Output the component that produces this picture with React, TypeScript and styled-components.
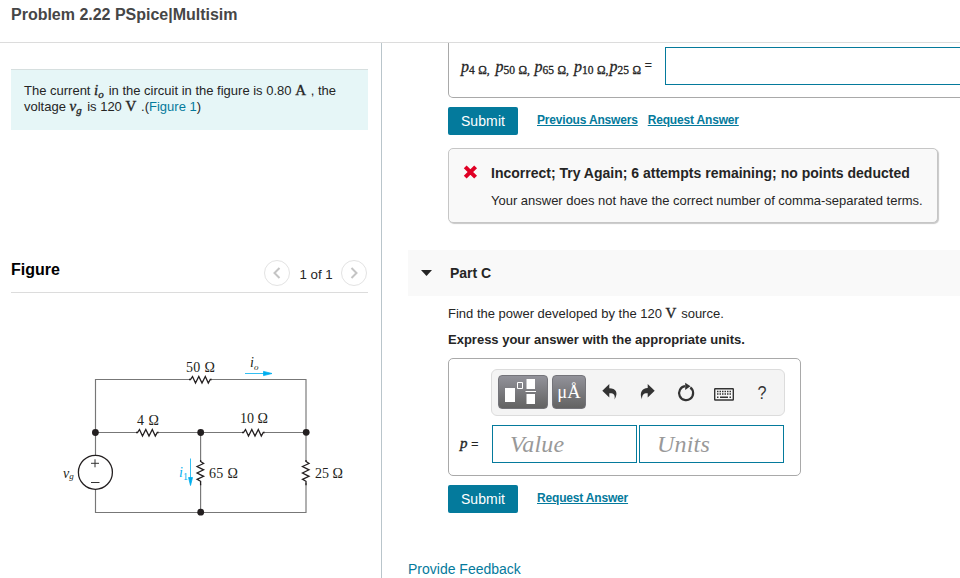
import React from "react";
import styled, { createGlobalStyle } from "styled-components";

const GlobalStyle = createGlobalStyle`
  * { box-sizing: border-box; }
  body { margin: 0; background: #fff; overflow: hidden; color: #252525; font-family: "Liberation Sans", Arial, sans-serif; font-size: 13px; }
`;

const Page = styled.div`width: 960px; height: 578px; overflow: hidden; display: flex; flex-direction: column;`;
const Header = styled.header`height: 43px; flex: none; border-bottom: 1px solid #dcdcdc; padding: 5px 11px 0;`;
const Title = styled.h1`margin: 0; font-size: 16px; line-height: 19px; color: #464646; white-space: pre; letter-spacing: -0.01px;`;
const Body = styled.div`display: grid; grid-template-columns: 382px 578px; flex: 1; min-height: 0;`;
const Left = styled.section`border-right: 1px solid #b9c5cb; padding: 26px 13px 0 11px; display: flex; flex-direction: column;`;
const Right = styled.section`padding-left: 66px; display: flex; flex-direction: column; overflow: hidden;`;

const Line = styled.div<{ $bold?: boolean; $ls?: number; $size?: number }>`
  white-space: pre;
  height: 16px;
  line-height: 16px;
  font-size: ${(p) => p.$size ?? 13}px;
  font-weight: ${(p) => (p.$bold ? 700 : 400)};
  letter-spacing: ${(p) => p.$ls ?? 0}px;
`;
const Intro = styled.div`height: 61px; flex: none; border-top: 1px solid #d6dfdf; background: #e6f6f7; padding: 12px 13px;`;
const Link = styled.span`color: #047a9c;`;
const Math = styled.span<{ $w?: number; $size?: number; $italic?: boolean }>`
  display: inline-block;
  width: ${(p) => (p.$w ? p.$w + "px" : "auto")};
  font-family: "Liberation Serif", serif;
  font-size: ${(p) => p.$size ?? 15}px;
  font-style: ${(p) => (p.$italic ? "italic" : "normal")};
  line-height: 16px;
  letter-spacing: 0;
  -webkit-text-stroke: 0.35px currentColor;
`;
const Sub = styled.span<{ $size?: number }>`
  font-size: ${(p) => p.$size ?? 11}px;
  position: relative;
  top: 3px;
`;

const FigureBar = styled.div`height: 53px; flex: none; margin-top: 110px; border-bottom: 1px solid #dcdcdc; display: flex; justify-content: space-between; padding: 20px 1px 0 0;`;
const FigureTitle = styled.h2`margin: 1px 0 0; font-size: 16px; line-height: 18px; color: #000;`;
const Pager = styled.div`display: flex; align-items: center; gap: 9.5px; height: 26px;`;
const PageText = styled.span`font-size: 13.300px; line-height: 16px; padding-top: 3px; width: 32px; white-space: nowrap; text-align: center;`;
const Round = styled.button`width: 26px; height: 26px; border: 1px solid #e3e3e3; border-radius: 50%; background: #fff; padding: 0; display: flex; align-items: center; justify-content: center;`;
const Drawing = styled.svg`display: block; flex: none; margin: 47px 0 0 39px;`;

const TermsBox = styled.div`height: 55px; width: 520px; flex: none; border: 1px solid #a9a9a9; border-top: 0; border-radius: 0 0 0 5px; display: flex;`;
const TermsLabel = styled.div`width: 216px; flex: none; padding: 16px 0 0 12px; white-space: pre; display: flex; color: #252525;`;
const TermsInput = styled.div`margin-top: 4px; height: 38px; flex: 1; border: 1px solid #047a9c; background: #fff;`;
const Power = styled.span<{ $w: number }>`width: ${(p) => p.$w}px; flex: none; font: italic 16px/16px "Liberation Serif", serif; -webkit-text-stroke: 0.3px currentColor;`;
const PowerSub = styled.span`font-size: 11.500px; font-style: normal; position: relative; top: 2px; word-spacing: 0.500px;`;
const Equals = styled.span`font: 13px/12px "Liberation Sans", sans-serif;`;

const Actions = styled.div<{ $mt: number }>`margin-top: ${(p) => p.$mt}px; height: 28px; flex: none; display: flex;`;
const Submit = styled.button`width: 70px; height: 28px; border: 0; border-radius: 2px; padding: 0; background: #047a9c; color: #fff; font: 14px/28px "Liberation Sans", sans-serif; letter-spacing: 0.1px; margin-right: 19px;`;
const ActionLink = styled.a`color: #047a9c; font-size: 12px; font-weight: 700; text-decoration: underline; line-height: 14px; margin: 6px 10px 0 0; white-space: nowrap; letter-spacing: -0.180px;`;

const Notice = styled.div`margin-top: 13px; width: 490px; height: 75px; flex: none; background: #f9f9f9; border: 1px solid #c6c6c6; border-radius: 5px; box-shadow: 1px 1px 1px #c8c8c8; display: flex; padding: 16px 0 0 14px;`;
const NoticeIcon = styled.svg`display: block; flex: none; margin: 0 13px 0 0;`;
const NoticeText = styled.div`display: flex; flex-direction: column; gap: 12px;`;
const PartBar = styled.div`margin: 27px 0 0 -40px; height: 46px; flex: none; background: #f9f9f9; padding: 0 0 0 13px; display: flex; align-items: center; gap: 18px;`;
const Prompt = styled.div`margin-top: 9px; display: flex; flex: none; flex-direction: column; gap: 11px;`;

const AnswerBox = styled.div`margin-top: 10px; width: 353px; height: 118px; flex: none; border: 1px solid #a9a9a9; border-radius: 5px; padding: 10px 15px 0 11px; display: flex; flex-direction: column;`;
const Toolbar = styled.div`margin-left: 31px; width: 294px; height: 47px; flex: none; border: 1px solid #dcdcdc; border-radius: 6px; background: #f4f4f4; display: flex; padding: 5px 0 0 6px;`;
const DarkButton = styled.button<{ $w: number }>`width: ${(p) => p.$w}px; height: 34px; flex: none; margin-right: 4px; padding: 0; border: 1px solid #74747a; border-radius: 4px; background: linear-gradient(#92929a, #626262); color: #fff; font: 18.500px/34px "Liberation Serif", serif; display: flex; align-items: center; justify-content: center;`;
const ToolIcons = styled.svg`display: block; flex: none;`;
const Fields = styled.div`margin-top: 9px; display: flex; height: 38px;`;
const FieldLabel = styled.div`width: 32px; flex: none; padding-top: 10px; white-space: pre; font: 13px/16px "Liberation Sans", sans-serif;`;
const Field = styled.div`width: 145px; flex: none; height: 38px; margin-right: 2px; border: 1px solid #047a9c; padding-left: 17px; font: italic 24px/36px "Liberation Serif", serif; letter-spacing: 0.200px; color: #999;`;
const Feedback = styled.a`margin: 47px 0 0 -40px; color: #047a9c; font-size: 14px; line-height: 18px;`;

const Wire = styled.path`fill: none; stroke: #777; stroke-width: 1.15;`;
const Resistor = styled.path`fill: none; stroke: #231f20; stroke-width: 1.3; stroke-linejoin: miter;`;
const Label = styled.text<{ $blue?: boolean; $italic?: boolean }>`font: ${(p) => (p.$italic ? "italic" : "normal")} 14px "Liberation Serif", serif; fill: ${(p) => (p.$blue ? "#00aeef" : "#231f20")};`;
const Arrow = styled.path`stroke: #00aeef; fill: #00aeef;`;

const terms = [
  { value: "4", comma: ",", width: 34.5 },
  { value: "50", comma: ",", width: 39 },
  { value: "65", comma: ",", width: 39.5 },
  { value: "10", comma: ",", width: 35.5 },
  { value: "25", comma: "", width: 35 },
];

const Circuit = () => (
  <Drawing width="320" height="190" viewBox="50 340 320 190">
    <Wire d="M190 379.5H95.5V455M95.5 489.500V512.500H306V483M306 462V379.500H212M95.500 432.500H137M159 432.500H243M265 432.500H306M200.600 432.500V461M200.600 484V512.500" />
    <Resistor d="M189 379.500h1.500l2-3 3 6.500 3.300-6.500 3.200 6.500 3.300-6.500 3 6.500 2-3.500h1.500" />
    <Resistor d="M136 432.500h1.500l2-3 3 6.500 3.300-6.500 3.200 6.500 3.300-6.500 3 6.500 2-3.500h1.500" />
    <Resistor d="M242 432.500h1.500l2-3 3 6.500 3.300-6.500 3.200 6.500 3.300-6.500 3 6.500 2-3.500h1.500" />
    <Resistor d="M200.600 460v1.500l3 2-6.500 3 6.500 3.300-6.500 3.200 6.500 3.300-6.500 3 3.500 2v4" />
    <Resistor d="M306 460v1.500l3 2-6.500 3 6.500 3.300-6.500 3.200 6.500 3.300-6.500 3 3.500 2v4" />
    <circle cx="95.400" cy="472.300" r="17" fill="#fff" stroke="#231f20" strokeWidth="1.300" />
    <path d="M91 463.300h8M95 459.300v8M91 482.500h8.500" stroke="#333" strokeWidth="1" />
    <circle cx="95.400" cy="432.500" r="3.400" fill="#231f20" />
    <circle cx="200.700" cy="432.500" r="3.400" fill="#231f20" />
    <circle cx="306.200" cy="432.300" r="3.400" fill="#231f20" />
    <circle cx="200.700" cy="512.200" r="3.400" fill="#231f20" />
    <Label x="186" y="372" textLength="29">50 Ω</Label>
    <Label x="137" y="424.500" textLength="22">4 Ω</Label>
    <Label x="240" y="423" textLength="28">10 Ω</Label>
    <Label x="209" y="477.500" textLength="29">65 Ω</Label>
    <Label x="315" y="477.500" textLength="28">25 Ω</Label>
    <Label $italic x="250" y="367">i<tspan fontSize="9" dy="3">o</tspan></Label>
    <Label $italic x="63" y="477.500">v<tspan fontSize="9" dy="1">g</tspan></Label>
    <Label $blue $italic x="179" y="477">i<tspan fontSize="10" fontStyle="normal" dy="2.500">1</tspan></Label>
    <Arrow d="M245 373.500h20M263.500 371.400l8.500 2.100-8.500 2.100z" strokeWidth=".8" />
    <Arrow d="M190.500 458.500v21M188.600 477.500h3.900l-2 8z" strokeWidth=".8" />
  </Drawing>
);

const EditorIcons = () => (
  <ToolIcons width="190" height="34" viewBox="590 375 190 34" fill="#333">
    <path d="M602.300 390.800l7-6.800v4.300c6.500 0 9.500 4.500 5.200 11.200 .9-4.800-.7-6.500-5.200-6.300v4.300z" />
    <path d="M654.700 390.800l-7-6.800v4c-6 .3-8.500 5-5.700 11.200 0-4.600 1.500-6.200 5.700-6v4.300z" />
    <path d="M690.300 387.500A7 7 0 1 1 685 386.200" fill="none" stroke="#333" strokeWidth="2.200" />
    <path d="M685.200 382.800l5.300 3.500-5.300 3.700z" />
    <rect x="714.700" y="388.700" width="18.600" height="11.300" rx=".5" fill="#f8f8f8" stroke="#333" strokeWidth="1.400" />
    <path d="M717 391.500h14M717 394h14" stroke="#333" strokeWidth="1.300" strokeDasharray="1.500 1" />
    <path d="M717 397.200h1.500M720 397.200h8M729.500 397.200h1.500" stroke="#333" strokeWidth="1.400" />
    <text x="757.500" y="398.500" fontFamily="Liberation Sans, sans-serif" fontSize="18" textLength="9" lengthAdjust="spacingAndGlyphs">?</text>
  </ToolIcons>
);

export default function App() {
  return (
    <Page>
      <GlobalStyle />
      <Header><Title>Problem 2.22 PSpice|Multisim</Title></Header>
      <Body>
        <Left>
          <Intro>
            <Line>The current <Math $italic $w={11}>i<Sub>o</Sub></Math> in the circuit in the figure is 0.80 <Math $w={12}>A</Math> , the</Line>
            <Line>voltage <Math $italic $w={14}>v<Sub>g</Sub></Math> is 120 <Math $w={12}>V</Math> .(<Link>Figure 1</Link>)</Line>
          </Intro>
          <FigureBar>
            <FigureTitle>Figure</FigureTitle>
            <Pager>
              <Round aria-label="Previous"><svg width="12" height="14" viewBox="0 0 12 14"><path d="M8.500 2L3.500 7l5 5" fill="none" stroke="#c4c4c4" strokeWidth="2" /></svg></Round>
              <PageText>1 of 1</PageText>
              <Round aria-label="Next"><svg width="12" height="14" viewBox="0 0 12 14"><path d="M3.500 2l5 5-5 5" fill="none" stroke="#c4c4c4" strokeWidth="2" /></svg></Round>
            </Pager>
          </FigureBar>
          <Circuit />
        </Left>
        <Right>
          <TermsBox>
            <TermsLabel>
              {terms.map((t) => (
                <Power key={t.value} $w={t.width}>p<PowerSub>{t.value} Ω{t.comma}</PowerSub></Power>
              ))}
              <Equals>=</Equals>
            </TermsLabel>
            <TermsInput />
          </TermsBox>
          <Actions $mt={9}>
            <Submit>Submit</Submit>
            <ActionLink>Previous Answers</ActionLink>
            <ActionLink>Request Answer</ActionLink>
          </Actions>
          <Notice>
            <NoticeIcon width="15" height="14" viewBox="0 0 15 14"><path d="M2.200 1.800l10.400 10.400M12.600 1.800L2.200 12.200" stroke="#e00025" strokeWidth="4" /></NoticeIcon>
            <NoticeText>
              <Line $bold $size={14}>Incorrect; Try Again; 6 attempts remaining; no points deducted</Line>
              <Line $ls={-0.01}>Your answer does not have the correct number of comma-separated terms.</Line>
            </NoticeText>
          </Notice>
          <PartBar>
            <svg width="11" height="6" viewBox="0 0 11 6"><path d="M0 0h11L5.500 6z" fill="#252525" /></svg>
            <Line $bold $size={14}>Part C</Line>
          </PartBar>
          <Prompt>
            <Line>Find the power developed by the 120 <Math $w={12}>V</Math> source.</Line>
            <Line $bold>Express your answer with the appropriate units.</Line>
          </Prompt>
          <AnswerBox>
            <Toolbar>
              <DarkButton $w={50} aria-label="Templates">
                <svg width="48" height="32" viewBox="499 376 48 32"><path d="M505 388h10v14h-10zM526.500 379h8.500v10h-8.500zM526.500 394h8.500v10h-8.500zM525.500 391h10.500v1h-10.500z" fill="#fff" /><path d="M517.500 382.500h5v6h-5z" fill="none" stroke="#fff" /></svg>
              </DarkButton>
              <DarkButton $w={34}>μÅ</DarkButton>
              <EditorIcons />
            </Toolbar>
            <Fields>
              <FieldLabel><Math $italic>p</Math> =</FieldLabel>
              <Field>Value</Field>
              <Field>Units</Field>
            </Fields>
          </AnswerBox>
          <Actions $mt={9}>
            <Submit>Submit</Submit>
            <ActionLink>Request Answer</ActionLink>
          </Actions>
          <Feedback>Provide Feedback</Feedback>
        </Right>
      </Body>
    </Page>
  );
}
